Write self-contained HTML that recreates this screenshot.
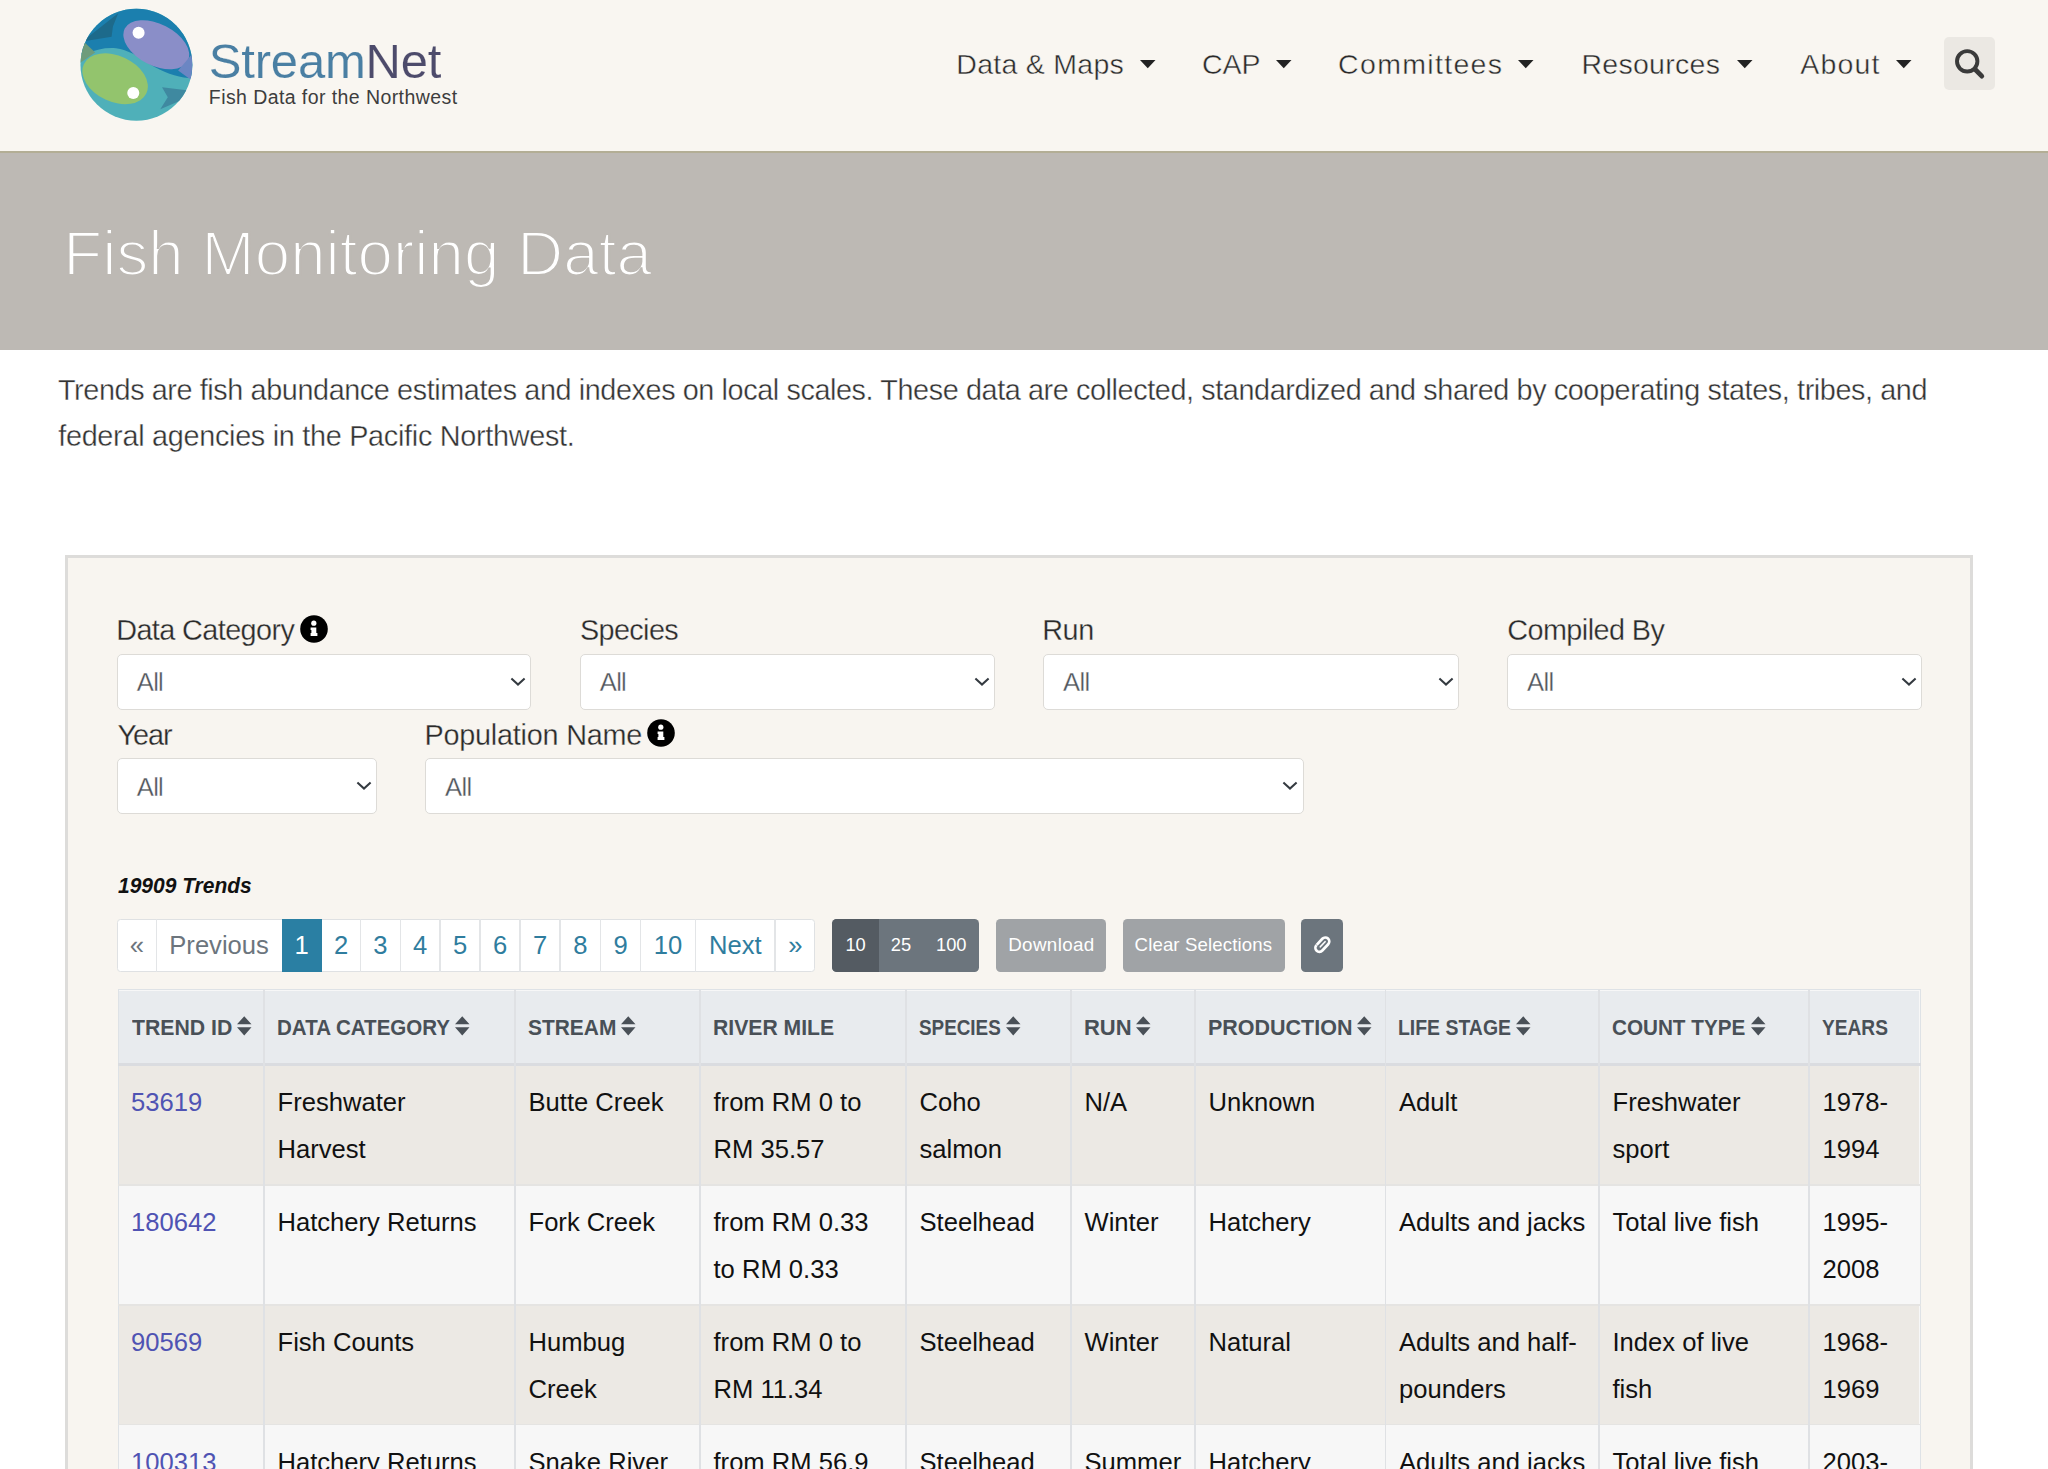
<!DOCTYPE html>
<html><head><meta charset="utf-8"><title>Fish Monitoring Data</title>
<style>
html,body{margin:0;padding:0;}
body{width:2048px;height:1469px;overflow:hidden;position:relative;background:#fff;font-family:"Liberation Sans",sans-serif;}
.t{position:absolute;line-height:1;white-space:nowrap;}
.b{position:absolute;box-sizing:border-box;}
svg{position:absolute;}
</style></head><body>

<div class="b" style="left:0.0px;top:0.0px;width:2048.0px;height:151.0px;background:#f9f6f1;"></div>
<div class="b" style="left:0.0px;top:151.2px;width:2048.0px;height:1.4px;background:#b3ae95;"></div>
<div class="b" style="left:0.0px;top:152.5px;width:2048.0px;height:197.5px;background:#bdb9b4;"></div>
<svg style="left:70px;top:0px" width="130" height="130" viewBox="0 0 1469 1469">
<defs><clipPath id="lc"><circle cx="750" cy="732" r="632"/></clipPath></defs>
<g clip-path="url(#lc)">
<rect x="0" y="0" width="1469" height="1469" fill="#4fb0b9"/>
<path d="M0 0 H1469 V885 L1340 882 C1200 862 1050 820 900 722 C780 640 650 560 520 545 C400 535 300 560 200 600 L0 645 Z" fill="#1b7fae"/>
<path d="M140 470 L545 150 L485 300 L470 415 Z" fill="#1d6a8b"/>
<ellipse cx="975" cy="505" rx="400" ry="235" transform="rotate(27 975 505)" fill="#8a8ec8"/>
<path d="M1222 797 L1385 605 L1385 915 Z" fill="#6b86c3"/>
<path d="M150 465 L285 592 L110 715 Z" fill="#6e9c7b"/>
<ellipse cx="510" cy="890" rx="390" ry="260" transform="rotate(25 510 890)" fill="#93c46d"/>
<path d="M1040 985 L1320 1020 L1310 1110 L1020 1235 L1105 1100 Z" fill="#3f89a0"/>
<circle cx="775" cy="370" r="68" fill="#fff"/>
<circle cx="715" cy="1050" r="68" fill="#fff"/>
</g></svg>
<div class="t" style="left:208.8px;top:37.0px;font-size:49px;color:#4a7fa3;font-weight:normal;font-style:normal;letter-spacing:-0.191px;-webkit-text-stroke:0.15px #f9f6f1;">Stream<span style="color:#4d4b6b">Net</span></div>
<div class="t" style="left:208.8px;top:88.1px;font-size:19.5px;color:#3d3d3d;font-weight:normal;font-style:normal;letter-spacing:0.421px;">Fish Data for the Northwest</div>
<div class="t" style="left:956.3px;top:50.4px;font-size:28.5px;color:#2a2a2a;font-weight:normal;font-style:normal;letter-spacing:0.275px;-webkit-text-stroke:0.45px #f9f6f1;">Data &amp; Maps</div>
<div class="t" style="left:1202.1px;top:50.4px;font-size:28.5px;color:#2a2a2a;font-weight:normal;font-style:normal;letter-spacing:-0.109px;-webkit-text-stroke:0.45px #f9f6f1;">CAP</div>
<div class="t" style="left:1338.1px;top:50.4px;font-size:28.5px;color:#2a2a2a;font-weight:normal;font-style:normal;letter-spacing:1.319px;-webkit-text-stroke:0.45px #f9f6f1;">Committees</div>
<div class="t" style="left:1581.4px;top:50.4px;font-size:28.5px;color:#2a2a2a;font-weight:normal;font-style:normal;letter-spacing:0.293px;-webkit-text-stroke:0.45px #f9f6f1;">Resources</div>
<div class="t" style="left:1800.3px;top:50.4px;font-size:28.5px;color:#2a2a2a;font-weight:normal;font-style:normal;letter-spacing:1.189px;-webkit-text-stroke:0.45px #f9f6f1;">About</div>
<svg style="left:1139.5px;top:60px" width="16" height="9" viewBox="0 0 16 9"><path d="M0 0 H15.5 L7.75 8.3 Z" fill="#222"/></svg>
<svg style="left:1276px;top:60px" width="16" height="9" viewBox="0 0 16 9"><path d="M0 0 H15.5 L7.75 8.3 Z" fill="#222"/></svg>
<svg style="left:1518px;top:60px" width="16" height="9" viewBox="0 0 16 9"><path d="M0 0 H15.5 L7.75 8.3 Z" fill="#222"/></svg>
<svg style="left:1736.5px;top:60px" width="16" height="9" viewBox="0 0 16 9"><path d="M0 0 H15.5 L7.75 8.3 Z" fill="#222"/></svg>
<svg style="left:1896px;top:60px" width="16" height="9" viewBox="0 0 16 9"><path d="M0 0 H15.5 L7.75 8.3 Z" fill="#222"/></svg>
<div class="b" style="left:1944.0px;top:37.0px;width:51.0px;height:53.0px;background:#ebe8e3;border-radius:5px;"></div>
<svg style="left:1944px;top:37px" width="51" height="53" viewBox="0 0 51 53"><circle cx="23.2" cy="24.3" r="10.2" fill="none" stroke="#3a3a3a" stroke-width="3.9"/><path d="M31 32.3 L37.8 39.1" stroke="#3a3a3a" stroke-width="4.8" stroke-linecap="round"/></svg>
<div class="t" style="left:63.3px;top:220.5px;font-size:63.6px;color:#fff;font-weight:normal;font-style:normal;letter-spacing:0.099px;-webkit-text-stroke:2.2px #bdb9b4;">Fish Monitoring Data</div>
<div class="t" style="left:58.0px;top:375.6px;font-size:28.8px;color:#333;font-weight:normal;font-style:normal;letter-spacing:-0.402px;-webkit-text-stroke:0.35px #fff;">Trends are fish abundance estimates and indexes on local scales. These data are collected, standardized and shared by cooperating states, tribes, and</div>
<div class="t" style="left:58.2px;top:422.2px;font-size:28.8px;color:#333;font-weight:normal;font-style:normal;letter-spacing:-0.283px;-webkit-text-stroke:0.35px #fff;">federal agencies in the Pacific Northwest.</div>
<div class="b" style="left:65.0px;top:555.0px;width:1908.0px;height:1045.0px;background:#f8f5f0;border:3px solid #dddcda;"></div>
<div class="t" style="left:116.2px;top:615.6px;font-size:28.8px;color:#2a2a2a;font-weight:normal;font-style:normal;letter-spacing:-0.58px;-webkit-text-stroke:0.3px #f8f5f0;">Data Category</div>
<div class="t" style="left:579.9px;top:615.6px;font-size:28.8px;color:#2a2a2a;font-weight:normal;font-style:normal;letter-spacing:-0.604px;-webkit-text-stroke:0.3px #f8f5f0;">Species</div>
<div class="t" style="left:1042.2px;top:615.6px;font-size:28.8px;color:#2a2a2a;font-weight:normal;font-style:normal;letter-spacing:-0.408px;-webkit-text-stroke:0.3px #f8f5f0;">Run</div>
<div class="t" style="left:1507.3px;top:615.6px;font-size:28.8px;color:#2a2a2a;font-weight:normal;font-style:normal;letter-spacing:-0.576px;-webkit-text-stroke:0.3px #f8f5f0;">Compiled By</div>
<div class="t" style="left:117.4px;top:720.6px;font-size:28.8px;color:#2a2a2a;font-weight:normal;font-style:normal;letter-spacing:-1.004px;-webkit-text-stroke:0.3px #f8f5f0;">Year</div>
<div class="t" style="left:424.4px;top:720.6px;font-size:28.8px;color:#2a2a2a;font-weight:normal;font-style:normal;letter-spacing:-0.21px;-webkit-text-stroke:0.3px #f8f5f0;">Population Name</div>
<svg style="left:298.8px;top:613.7px" width="30" height="30" viewBox="0 0 30 30"><circle cx="15" cy="15" r="13.8" fill="#000"/><circle cx="14.8" cy="9.2" r="2.6" fill="#fff"/><path d="M11.6 13.4 H17.3 V18.9 H18.4 V22.1 H11.6 V18.9 H12.4 V15.9 H11.6 Z" fill="#fff"/></svg>
<svg style="left:646px;top:718px" width="30" height="30" viewBox="0 0 30 30"><circle cx="15" cy="15" r="13.8" fill="#000"/><circle cx="14.8" cy="9.2" r="2.6" fill="#fff"/><path d="M11.6 13.4 H17.3 V18.9 H18.4 V22.1 H11.6 V18.9 H12.4 V15.9 H11.6 Z" fill="#fff"/></svg>
<div class="b" style="left:116.7px;top:653.5px;width:414.3px;height:56.0px;background:#fff;border:1.6px solid #dddbd7;border-radius:5px;"></div>
<div class="t" style="left:136.8px;top:670.1px;font-size:25.6px;color:#50555b;font-weight:normal;font-style:normal;letter-spacing:-0.726px;-webkit-text-stroke:0.3px #fff;">All</div>
<svg style="left:509.6px;top:675.5px" width="16" height="12" viewBox="0 0 16 12"><path d="M1.4 2.4 L8 8.6 L14.6 2.4" fill="none" stroke="#343a40" stroke-width="2"/></svg>
<div class="b" style="left:579.7px;top:653.5px;width:415.3px;height:56.0px;background:#fff;border:1.6px solid #dddbd7;border-radius:5px;"></div>
<div class="t" style="left:599.8px;top:670.1px;font-size:25.6px;color:#50555b;font-weight:normal;font-style:normal;letter-spacing:-0.726px;-webkit-text-stroke:0.3px #fff;">All</div>
<svg style="left:973.6px;top:675.5px" width="16" height="12" viewBox="0 0 16 12"><path d="M1.4 2.4 L8 8.6 L14.6 2.4" fill="none" stroke="#343a40" stroke-width="2"/></svg>
<div class="b" style="left:1043.0px;top:653.5px;width:416.0px;height:56.0px;background:#fff;border:1.6px solid #dddbd7;border-radius:5px;"></div>
<div class="t" style="left:1063.1px;top:670.1px;font-size:25.6px;color:#50555b;font-weight:normal;font-style:normal;letter-spacing:-0.726px;-webkit-text-stroke:0.3px #fff;">All</div>
<svg style="left:1437.6px;top:675.5px" width="16" height="12" viewBox="0 0 16 12"><path d="M1.4 2.4 L8 8.6 L14.6 2.4" fill="none" stroke="#343a40" stroke-width="2"/></svg>
<div class="b" style="left:1507.0px;top:653.5px;width:415.0px;height:56.0px;background:#fff;border:1.6px solid #dddbd7;border-radius:5px;"></div>
<div class="t" style="left:1527.1px;top:670.1px;font-size:25.6px;color:#50555b;font-weight:normal;font-style:normal;letter-spacing:-0.726px;-webkit-text-stroke:0.3px #fff;">All</div>
<svg style="left:1900.6px;top:675.5px" width="16" height="12" viewBox="0 0 16 12"><path d="M1.4 2.4 L8 8.6 L14.6 2.4" fill="none" stroke="#343a40" stroke-width="2"/></svg>
<div class="b" style="left:116.7px;top:758.0px;width:260.3px;height:56.4px;background:#fff;border:1.6px solid #dddbd7;border-radius:5px;"></div>
<div class="t" style="left:136.8px;top:774.6px;font-size:25.6px;color:#50555b;font-weight:normal;font-style:normal;letter-spacing:-0.726px;-webkit-text-stroke:0.3px #fff;">All</div>
<svg style="left:355.6px;top:780.2px" width="16" height="12" viewBox="0 0 16 12"><path d="M1.4 2.4 L8 8.6 L14.6 2.4" fill="none" stroke="#343a40" stroke-width="2"/></svg>
<div class="b" style="left:425.0px;top:758.0px;width:878.5px;height:56.4px;background:#fff;border:1.6px solid #dddbd7;border-radius:5px;"></div>
<div class="t" style="left:445.1px;top:774.6px;font-size:25.6px;color:#50555b;font-weight:normal;font-style:normal;letter-spacing:-0.726px;-webkit-text-stroke:0.3px #fff;">All</div>
<svg style="left:1282.1px;top:780.2px" width="16" height="12" viewBox="0 0 16 12"><path d="M1.4 2.4 L8 8.6 L14.6 2.4" fill="none" stroke="#343a40" stroke-width="2"/></svg>
<div class="t" style="left:117.7px;top:874.6px;font-size:22.5px;color:#111;font-weight:bold;font-style:italic;letter-spacing:0px;transform:scaleX(0.9324);transform-origin:0 0;">19909 Trends</div>
<div class="b" style="left:117.0px;top:919.4px;width:698.4px;height:52.8px;background:#fff;border:1.6px solid #dfe1e3;border-radius:3.5px;"></div>
<div class="b" style="left:281.6px;top:919.4px;width:40.0px;height:52.8px;background:#2a7fa3;"></div>
<div class="b" style="left:155.8px;top:919.4px;width:1.6px;height:52.8px;background:#e3e5e7;"></div>
<div class="b" style="left:359.8px;top:919.4px;width:1.6px;height:52.8px;background:#e3e5e7;"></div>
<div class="b" style="left:399.5px;top:919.4px;width:1.6px;height:52.8px;background:#e3e5e7;"></div>
<div class="b" style="left:439.2px;top:919.4px;width:1.6px;height:52.8px;background:#e3e5e7;"></div>
<div class="b" style="left:479.2px;top:919.4px;width:1.6px;height:52.8px;background:#e3e5e7;"></div>
<div class="b" style="left:519.2px;top:919.4px;width:1.6px;height:52.8px;background:#e3e5e7;"></div>
<div class="b" style="left:559.2px;top:919.4px;width:1.6px;height:52.8px;background:#e3e5e7;"></div>
<div class="b" style="left:599.7px;top:919.4px;width:1.6px;height:52.8px;background:#e3e5e7;"></div>
<div class="b" style="left:639.7px;top:919.4px;width:1.6px;height:52.8px;background:#e3e5e7;"></div>
<div class="b" style="left:694.7px;top:919.4px;width:1.6px;height:52.8px;background:#e3e5e7;"></div>
<div class="b" style="left:774.4px;top:919.4px;width:1.6px;height:52.8px;background:#e3e5e7;"></div>
<div class="t" style="left:117.0px;width:39.6px;text-align:center;top:932.8px;font-size:25.6px;color:#6c757d">&laquo;</div>
<div class="t" style="left:156.6px;width:125.0px;text-align:center;top:932.8px;font-size:25.6px;color:#6c757d">Previous</div>
<div class="t" style="left:281.6px;width:40.0px;text-align:center;top:932.8px;font-size:25.6px;color:#fff">1</div>
<div class="t" style="left:321.6px;width:39.0px;text-align:center;top:932.8px;font-size:25.6px;color:#2f7d9e">2</div>
<div class="t" style="left:360.6px;width:39.7px;text-align:center;top:932.8px;font-size:25.6px;color:#2f7d9e">3</div>
<div class="t" style="left:400.3px;width:39.7px;text-align:center;top:932.8px;font-size:25.6px;color:#2f7d9e">4</div>
<div class="t" style="left:440.0px;width:40.0px;text-align:center;top:932.8px;font-size:25.6px;color:#2f7d9e">5</div>
<div class="t" style="left:480.0px;width:40.0px;text-align:center;top:932.8px;font-size:25.6px;color:#2f7d9e">6</div>
<div class="t" style="left:520.0px;width:40.0px;text-align:center;top:932.8px;font-size:25.6px;color:#2f7d9e">7</div>
<div class="t" style="left:560.0px;width:40.5px;text-align:center;top:932.8px;font-size:25.6px;color:#2f7d9e">8</div>
<div class="t" style="left:600.5px;width:40.0px;text-align:center;top:932.8px;font-size:25.6px;color:#2f7d9e">9</div>
<div class="t" style="left:640.5px;width:55.0px;text-align:center;top:932.8px;font-size:25.6px;color:#2f7d9e">10</div>
<div class="t" style="left:695.5px;width:79.7px;text-align:center;top:932.8px;font-size:25.6px;color:#2f7d9e">Next</div>
<div class="t" style="left:775.2px;width:40.2px;text-align:center;top:932.8px;font-size:25.6px;color:#2f7d9e">&raquo;</div>
<div class="b" style="left:832.3px;top:918.9px;width:147.2px;height:53.3px;background:#6c757d;border-radius:4.5px;"></div>
<div class="b" style="left:832.3px;top:918.9px;width:46.5px;height:53.3px;background:#545b62;border-radius:5px 0 0 5px;"></div>
<div class="t" style="left:832.3px;width:46.5px;text-align:center;top:936.0px;font-size:18.3px;color:#fff">10</div>
<div class="t" style="left:878.8px;width:44.2px;text-align:center;top:936.0px;font-size:18.3px;color:#fff">25</div>
<div class="t" style="left:923.0px;width:56.5px;text-align:center;top:936.0px;font-size:18.3px;color:#fff">100</div>
<div class="b" style="left:996.3px;top:918.6px;width:109.5px;height:53.8px;background:#a0a3a6;border-radius:4.5px;"></div>
<div class="b" style="left:1122.9px;top:918.6px;width:161.8px;height:53.8px;background:#a0a3a6;border-radius:4.5px;"></div>
<div class="t" style="left:1008.2px;top:936.1px;font-size:18.8px;color:#fff;font-weight:normal;font-style:normal;letter-spacing:0.367px;">Download</div>
<div class="t" style="left:1134.6px;top:936.3px;font-size:18.6px;color:#fff;font-weight:normal;font-style:normal;letter-spacing:0.132px;">Clear Selections</div>
<div class="b" style="left:1300.6px;top:918.6px;width:42.4px;height:53.8px;background:#6c757d;border-radius:4.5px;"></div>
<svg style="left:1310px;top:933px" width="24" height="24" viewBox="0 0 24 24"><g transform="rotate(43 12 12)"><path d="M8 15.5 V7.2 A4 4 0 0 1 16 7.2 V15.8 A4 4 0 0 1 8 15.8" fill="none" stroke="#fff" stroke-width="2.7"/><path d="M12 7.5 V14.5" stroke="#fff" stroke-width="1.6" stroke-linecap="round"/></g></svg>
<div class="b" style="left:117.6px;top:989.0px;width:1803.4px;height:480.0px;background:#f7f7f7;border:1.6px solid #dee2e6;border-bottom:none;"></div>
<div class="b" style="left:119.2px;top:990.6px;width:1800.2px;height:73.4px;background:#e8ebee;"></div>
<div class="b" style="left:119.2px;top:1064.0px;width:1800.2px;height:120.8px;background:#ece9e4;"></div>
<div class="b" style="left:119.2px;top:1304.8px;width:1800.2px;height:119.8px;background:#ece9e4;"></div>
<div class="b" style="left:117.6px;top:1062.8px;width:1803.4px;height:3.0px;background:#dadce0;"></div>
<div class="b" style="left:117.6px;top:1184.0px;width:1803.4px;height:1.6px;background:#e5e4e2;"></div>
<div class="b" style="left:117.6px;top:1304.0px;width:1803.4px;height:1.6px;background:#e5e4e2;"></div>
<div class="b" style="left:117.6px;top:1423.8px;width:1803.4px;height:1.6px;background:#e5e4e2;"></div>
<div class="b" style="left:263.2px;top:989.0px;width:1.6px;height:480.0px;background:#dfe1e4;"></div>
<div class="b" style="left:514.2px;top:989.0px;width:1.6px;height:480.0px;background:#dfe1e4;"></div>
<div class="b" style="left:699.2px;top:989.0px;width:1.6px;height:480.0px;background:#dfe1e4;"></div>
<div class="b" style="left:905.2px;top:989.0px;width:1.6px;height:480.0px;background:#dfe1e4;"></div>
<div class="b" style="left:1070.2px;top:989.0px;width:1.6px;height:480.0px;background:#dfe1e4;"></div>
<div class="b" style="left:1194.2px;top:989.0px;width:1.6px;height:480.0px;background:#dfe1e4;"></div>
<div class="b" style="left:1384.7px;top:989.0px;width:1.6px;height:480.0px;background:#dfe1e4;"></div>
<div class="b" style="left:1598.2px;top:989.0px;width:1.6px;height:480.0px;background:#dfe1e4;"></div>
<div class="b" style="left:1808.2px;top:989.0px;width:1.6px;height:480.0px;background:#dfe1e4;"></div>
<div class="t" style="left:131.5px;top:1016.6px;font-size:22.5px;color:#495057;font-weight:bold;font-style:normal;letter-spacing:0px;transform:scaleX(0.9441);transform-origin:0 0;">TREND ID</div>
<svg style="left:236.9px;top:1016.4px" width="15" height="20" viewBox="0 0 15 20"><path d="M7.25 0.3 L14.5 8.3 H0 Z M0 11.2 H14.5 L7.25 19.5 Z" fill="#495057"/></svg>
<div class="t" style="left:276.7px;top:1016.6px;font-size:22.5px;color:#495057;font-weight:bold;font-style:normal;letter-spacing:0px;transform:scaleX(0.9129);transform-origin:0 0;">DATA CATEGORY</div>
<svg style="left:455.4px;top:1016.4px" width="15" height="20" viewBox="0 0 15 20"><path d="M7.25 0.3 L14.5 8.3 H0 Z M0 11.2 H14.5 L7.25 19.5 Z" fill="#495057"/></svg>
<div class="t" style="left:527.8px;top:1016.6px;font-size:22.5px;color:#495057;font-weight:bold;font-style:normal;letter-spacing:0px;transform:scaleX(0.9298);transform-origin:0 0;">STREAM</div>
<svg style="left:620.7px;top:1016.4px" width="15" height="20" viewBox="0 0 15 20"><path d="M7.25 0.3 L14.5 8.3 H0 Z M0 11.2 H14.5 L7.25 19.5 Z" fill="#495057"/></svg>
<div class="t" style="left:712.6px;top:1016.6px;font-size:22.5px;color:#495057;font-weight:bold;font-style:normal;letter-spacing:0px;transform:scaleX(0.9411);transform-origin:0 0;">RIVER MILE</div>
<div class="t" style="left:919.0px;top:1016.6px;font-size:22.5px;color:#495057;font-weight:bold;font-style:normal;letter-spacing:0px;transform:scaleX(0.8379);transform-origin:0 0;">SPECIES</div>
<svg style="left:1006.1px;top:1016.4px" width="15" height="20" viewBox="0 0 15 20"><path d="M7.25 0.3 L14.5 8.3 H0 Z M0 11.2 H14.5 L7.25 19.5 Z" fill="#495057"/></svg>
<div class="t" style="left:1084.2px;top:1016.6px;font-size:22.5px;color:#495057;font-weight:bold;font-style:normal;letter-spacing:0px;transform:scaleX(0.9762);transform-origin:0 0;">RUN</div>
<svg style="left:1136.3px;top:1016.4px" width="15" height="20" viewBox="0 0 15 20"><path d="M7.25 0.3 L14.5 8.3 H0 Z M0 11.2 H14.5 L7.25 19.5 Z" fill="#495057"/></svg>
<div class="t" style="left:1207.5px;top:1016.6px;font-size:22.5px;color:#495057;font-weight:bold;font-style:normal;letter-spacing:0px;transform:scaleX(0.9550);transform-origin:0 0;">PRODUCTION</div>
<svg style="left:1356.5px;top:1016.4px" width="15" height="20" viewBox="0 0 15 20"><path d="M7.25 0.3 L14.5 8.3 H0 Z M0 11.2 H14.5 L7.25 19.5 Z" fill="#495057"/></svg>
<div class="t" style="left:1398.1px;top:1016.6px;font-size:22.5px;color:#495057;font-weight:bold;font-style:normal;letter-spacing:0px;transform:scaleX(0.8632);transform-origin:0 0;">LIFE STAGE</div>
<svg style="left:1516.4px;top:1016.4px" width="15" height="20" viewBox="0 0 15 20"><path d="M7.25 0.3 L14.5 8.3 H0 Z M0 11.2 H14.5 L7.25 19.5 Z" fill="#495057"/></svg>
<div class="t" style="left:1612.1px;top:1016.6px;font-size:22.5px;color:#495057;font-weight:bold;font-style:normal;letter-spacing:0px;transform:scaleX(0.9189);transform-origin:0 0;">COUNT TYPE</div>
<svg style="left:1750.6px;top:1016.4px" width="15" height="20" viewBox="0 0 15 20"><path d="M7.25 0.3 L14.5 8.3 H0 Z M0 11.2 H14.5 L7.25 19.5 Z" fill="#495057"/></svg>
<div class="t" style="left:1821.8px;top:1016.6px;font-size:22.5px;color:#495057;font-weight:bold;font-style:normal;letter-spacing:0px;transform:scaleX(0.8509);transform-origin:0 0;">YEARS</div>
<div class="t" style="left:131.1px;top:1078.6px;font-size:25.6px;line-height:47px;color:#4f53b3">53619</div>
<div class="t" style="left:277.5px;top:1078.6px;font-size:25.6px;line-height:47px;color:#111">Freshwater<br>Harvest</div>
<div class="t" style="left:528.5px;top:1078.6px;font-size:25.6px;line-height:47px;color:#111">Butte Creek</div>
<div class="t" style="left:713.5px;top:1078.6px;font-size:25.6px;line-height:47px;color:#111">from RM 0 to<br>RM 35.57</div>
<div class="t" style="left:919.5px;top:1078.6px;font-size:25.6px;line-height:47px;color:#111">Coho<br>salmon</div>
<div class="t" style="left:1084.5px;top:1078.6px;font-size:25.6px;line-height:47px;color:#111">N/A</div>
<div class="t" style="left:1208.5px;top:1078.6px;font-size:25.6px;line-height:47px;color:#111">Unknown</div>
<div class="t" style="left:1399.0px;top:1078.6px;font-size:25.6px;line-height:47px;color:#111">Adult</div>
<div class="t" style="left:1612.5px;top:1078.6px;font-size:25.6px;line-height:47px;color:#111">Freshwater<br>sport</div>
<div class="t" style="left:1822.5px;top:1078.6px;font-size:25.6px;line-height:47px;color:#111">1978-<br>1994</div>
<div class="t" style="left:131.1px;top:1199.4px;font-size:25.6px;line-height:47px;color:#4f53b3">180642</div>
<div class="t" style="left:277.5px;top:1199.4px;font-size:25.6px;line-height:47px;color:#111">Hatchery Returns</div>
<div class="t" style="left:528.5px;top:1199.4px;font-size:25.6px;line-height:47px;color:#111">Fork Creek</div>
<div class="t" style="left:713.5px;top:1199.4px;font-size:25.6px;line-height:47px;color:#111">from RM 0.33<br>to RM 0.33</div>
<div class="t" style="left:919.5px;top:1199.4px;font-size:25.6px;line-height:47px;color:#111">Steelhead</div>
<div class="t" style="left:1084.5px;top:1199.4px;font-size:25.6px;line-height:47px;color:#111">Winter</div>
<div class="t" style="left:1208.5px;top:1199.4px;font-size:25.6px;line-height:47px;color:#111">Hatchery</div>
<div class="t" style="left:1399.0px;top:1199.4px;font-size:25.6px;line-height:47px;color:#111">Adults and jacks</div>
<div class="t" style="left:1612.5px;top:1199.4px;font-size:25.6px;line-height:47px;color:#111">Total live fish</div>
<div class="t" style="left:1822.5px;top:1199.4px;font-size:25.6px;line-height:47px;color:#111">1995-<br>2008</div>
<div class="t" style="left:131.1px;top:1319.4px;font-size:25.6px;line-height:47px;color:#4f53b3">90569</div>
<div class="t" style="left:277.5px;top:1319.4px;font-size:25.6px;line-height:47px;color:#111">Fish Counts</div>
<div class="t" style="left:528.5px;top:1319.4px;font-size:25.6px;line-height:47px;color:#111">Humbug<br>Creek</div>
<div class="t" style="left:713.5px;top:1319.4px;font-size:25.6px;line-height:47px;color:#111">from RM 0 to<br>RM 11.34</div>
<div class="t" style="left:919.5px;top:1319.4px;font-size:25.6px;line-height:47px;color:#111">Steelhead</div>
<div class="t" style="left:1084.5px;top:1319.4px;font-size:25.6px;line-height:47px;color:#111">Winter</div>
<div class="t" style="left:1208.5px;top:1319.4px;font-size:25.6px;line-height:47px;color:#111">Natural</div>
<div class="t" style="left:1399.0px;top:1319.4px;font-size:25.6px;line-height:47px;color:#111">Adults and half-<br>pounders</div>
<div class="t" style="left:1612.5px;top:1319.4px;font-size:25.6px;line-height:47px;color:#111">Index of live<br>fish</div>
<div class="t" style="left:1822.5px;top:1319.4px;font-size:25.6px;line-height:47px;color:#111">1968-<br>1969</div>
<div class="t" style="left:131.1px;top:1439.2px;font-size:25.6px;line-height:47px;color:#4f53b3">100313</div>
<div class="t" style="left:277.5px;top:1439.2px;font-size:25.6px;line-height:47px;color:#111">Hatchery Returns</div>
<div class="t" style="left:528.5px;top:1439.2px;font-size:25.6px;line-height:47px;color:#111">Snake River</div>
<div class="t" style="left:713.5px;top:1439.2px;font-size:25.6px;line-height:47px;color:#111">from RM 56.9<br>to RM 56.9</div>
<div class="t" style="left:919.5px;top:1439.2px;font-size:25.6px;line-height:47px;color:#111">Steelhead</div>
<div class="t" style="left:1084.5px;top:1439.2px;font-size:25.6px;line-height:47px;color:#111">Summer</div>
<div class="t" style="left:1208.5px;top:1439.2px;font-size:25.6px;line-height:47px;color:#111">Hatchery</div>
<div class="t" style="left:1399.0px;top:1439.2px;font-size:25.6px;line-height:47px;color:#111">Adults and jacks</div>
<div class="t" style="left:1612.5px;top:1439.2px;font-size:25.6px;line-height:47px;color:#111">Total live fish</div>
<div class="t" style="left:1822.5px;top:1439.2px;font-size:25.6px;line-height:47px;color:#111">2003-<br>2019</div>
</body></html>
